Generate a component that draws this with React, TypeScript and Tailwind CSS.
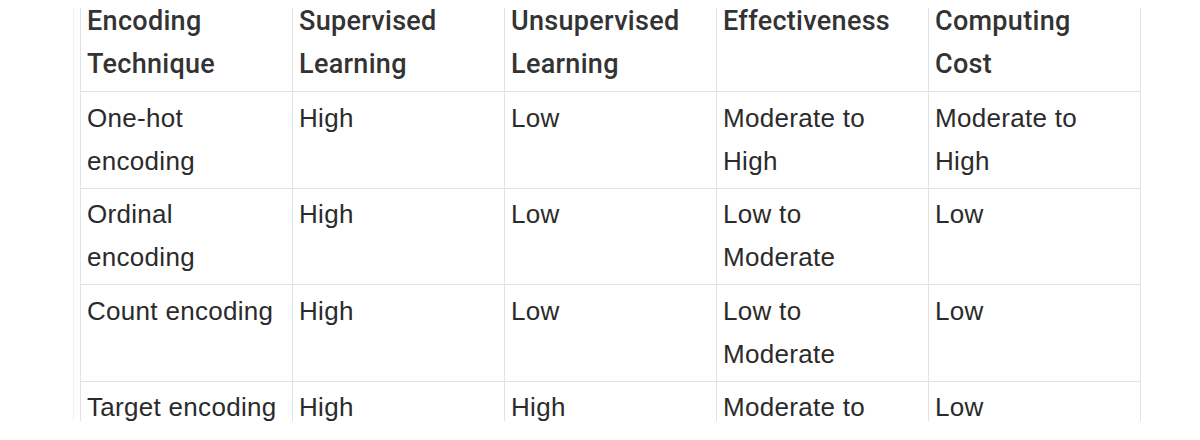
const header = [
  "Encoding Technique",
  "Supervised Learning",
  "Unsupervised Learning",
  "Effectiveness",
  "Computing Cost",
];

const rows = [
  ["One-hot encoding", "High", "Low", "Moderate to High", "Moderate to High"],
  ["Ordinal encoding", "High", "Low", "Low to Moderate", "Low"],
  ["Count encoding", "High", "Low", "Low to Moderate", "Low"],
  ["Target encoding", "High", "High", "Moderate to High", "Low"],
];

const cell =
  "border-r border-[#e3e3e3] pl-[6px] pr-[10px] py-[4.75px] leading-[43px]";

export default function App() {
  return (
    <div className="h-[440px] w-[1200px] bg-white font-['Liberation_Sans',Arial,sans-serif]">
      <div className="pt-[8px]">
        <div className="ml-[73px] h-[413px] w-[1068px] overflow-hidden border-l border-[#f1f1f1]">
          <div className="ml-[6px] mt-[-12.5px] grid grid-cols-[212px_212px_212px_212px_212px] border-l border-[#e3e3e3]">
            {header.map((h) => (
              <div
                key={h}
                className={`${cell} border-b font-['Roboto',sans-serif] text-[27px] font-medium tracking-[0.3px] text-[#333333]`}
              >
                {h}
              </div>
            ))}
            {rows.map((r, i) =>
              r.map((c, j) => (
                <div
                  key={`${i}-${j}`}
                  className={`${cell} border-b text-[26px] tracking-[0.3px] text-[#2b2b2b]`}
                >
                  {c}
                </div>
              ))
            )}
          </div>
        </div>
      </div>
    </div>
  );
}
